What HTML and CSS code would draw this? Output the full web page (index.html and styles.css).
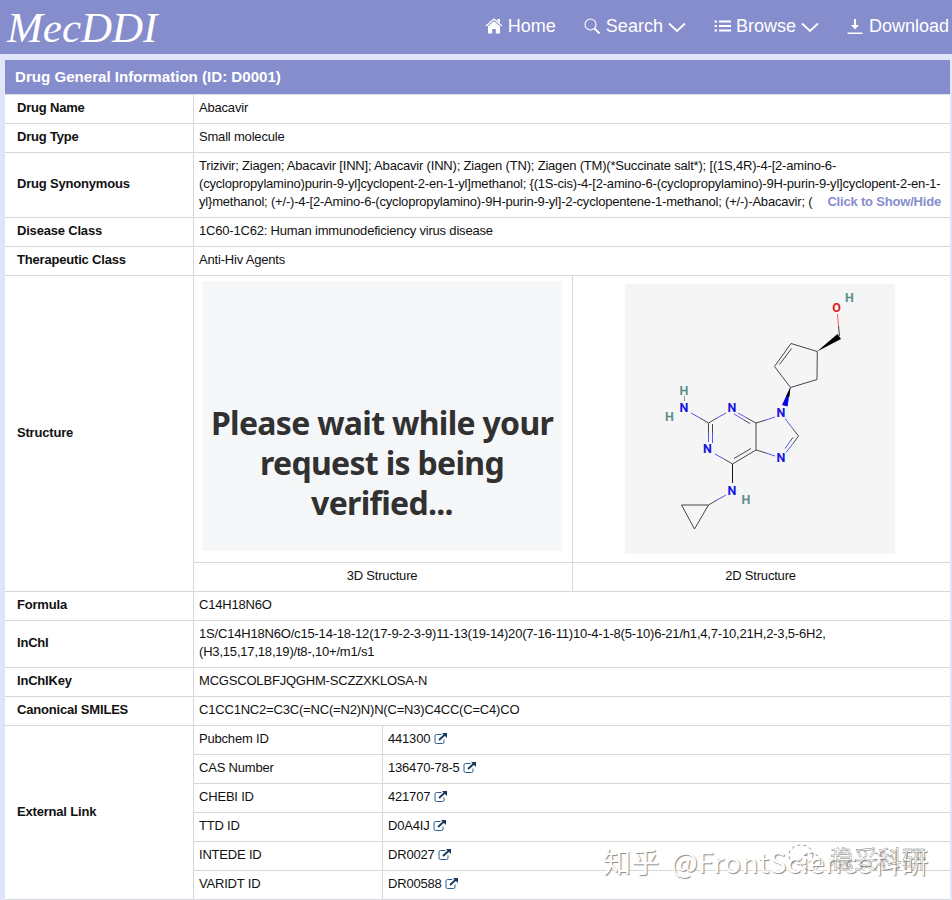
FILE: index.html
```html
<!DOCTYPE html>
<html lang="en">
<head>
    <meta charset="UTF-8">
    <meta name="viewport" content="width=device-width, initial-scale=1.0">
    <title>MecDDI - Abacavir</title>
    <link rel="stylesheet" href="styles.css">
</head>
<body>

<svg class="sprite">
    <symbol id="chevron" viewBox="0 0 18 11">
        <path d="M1 1.5 L9 9 L17 1.5" fill="none" stroke="#fff" stroke-width="1.8"/>
    </symbol>
    <symbol id="external" viewBox="0 0 14 13">
        <path d="M7.5 2.5 H2.5 Q1 2.5 1 4 V10 Q1 11.5 2.5 11.5 H8.5 Q10 11.5 10 10 V7.5" fill="none" stroke="#2d5c8c" stroke-width="1"/>
        <path d="M5 8 L11 2.5" fill="none" stroke="#16385e" stroke-width="1.8"/>
        <path d="M8 1 H13 V6 Z" fill="#16385e"/>
    </symbol>
</svg>

<header class="navbar">
    <a class="logo" href="#">MecDDI</a>
    <nav class="menu">
        <a class="home" href="#">
            <svg width="18" height="16" viewBox="0 0 18 16">
                <path d="M1 8 L9 1 L17 8" fill="none" stroke="#fff" stroke-width="1.3"/>
                <path d="M12.5 1 H15 V5 L12.5 3 Z" fill="#fff"/>
                <path d="M3 8.2 L9 3.2 L15 8.2 V15.5 H10.8 V11 H7.2 V15.5 H3 Z" fill="#fff"/>
            </svg>
            <span>Home</span>
        </a>
        <a class="search" href="#">
            <svg width="17" height="17" viewBox="0 0 17 17">
                <circle cx="6.5" cy="6.5" r="5.5" fill="none" stroke="#fff" stroke-width="1.1"/>
                <path d="M10.5 10.5 L15.5 15.5" stroke="#fff" stroke-width="2"/>
            </svg>
            <span>Search</span>
            <svg class="arrow" width="18" height="11"><use href="#chevron"/></svg>
        </a>
        <a class="browse" href="#">
            <svg width="17" height="14" viewBox="0 0 17 14">
                <path d="M5 2.5 H17 M5 7 H17 M5 11.5 H17 M0.5 2.5 H3 M0.5 7 H3 M0.5 11.5 H3" stroke="#fff" stroke-width="2"/>
            </svg>
            <span>Browse</span>
            <svg class="arrow" width="18" height="11"><use href="#chevron"/></svg>
        </a>
        <a class="download" href="#">
            <svg width="16" height="17" viewBox="0 0 16 17">
                <path d="M7 1 H9 V7 H12 L8 11.5 L4 7 H7 Z M0.5 14.5 H15.5 V16 H0.5 Z" fill="#fff"/>
            </svg>
            <span>Download</span>
        </a>
    </nav>
</header>

<main class="content">
    <table class="drug-table">
        <colgroup>
            <col class="col-label">
            <col class="col-sub">
            <col class="col-mid">
            <col>
        </colgroup>
        <thead>
            <tr><th colspan="4">Drug General Information (ID: D0001)</th></tr>
        </thead>
        <tbody>
            <tr>
                <th>Drug Name</th>
                <td colspan="3">Abacavir</td>
            </tr>
            <tr>
                <th>Drug Type</th>
                <td colspan="3">Small molecule</td>
            </tr>
            <tr>
                <th>Drug Synonymous</th>
                <td colspan="3">
                    Trizivir; Ziagen; Abacavir [INN]; Abacavir (INN); Ziagen (TN); Ziagen (TM)(*Succinate salt*); [(1S,4R)-4-[2-amino-6-<br>
                    (cyclopropylamino)purin-9-yl]cyclopent-2-en-1-yl]methanol; {(1S-cis)-4-[2-amino-6-(cyclopropylamino)-9H-purin-9-yl]cyclopent-2-en-1-<br>
                    yl}methanol; (+/-)-4-[2-Amino-6-(cyclopropylamino)-9H-purin-9-yl]-2-cyclopentene-1-methanol; (+/-)-Abacavir; (
                    <a class="toggle" href="#">Click to Show/Hide</a>
                </td>
            </tr>
            <tr>
                <th>Disease Class</th>
                <td colspan="3">1C60-1C62: Human immunodeficiency virus disease</td>
            </tr>
            <tr>
                <th>Therapeutic Class</th>
                <td colspan="3">Anti-Hiv Agents</td>
            </tr>
            <tr>
                <th rowspan="2">Structure</th>
                <td colspan="2" class="view-3d">
                    <div class="wait">Please wait while your<br>request is being<br>verified...</div>
                </td>
                <td class="view-2d">
                    <svg class="molecule" width="270" height="270" viewBox="0 4 270 270">
                        <!-- carbon bonds -->
                        <g fill="none" stroke="#333" stroke-width="0.9">
                            <path d="M166 63.5 L192.300 71.5 L192 99.500 L165.500 107.500 L149.500 86.500 Z"/>
                            <path d="M166.500 68.500 L154.500 84.500"/>
                            <path d="M83.500 143 V153 M87.500 144 V153 M83.500 143 L92 138 M83.500 143 L75 138"/>
                            <path d="M131 143 V170 L107.500 184 M126 168.500 L109 178.500 M107.500 184 L99 179"/>
                            <path d="M107.500 184 V203" stroke="#000"/>
                            <path d="M83.500 225 H56.500 L69.500 249 Z M83.500 225 L92 220"/>
                            <path d="M131 143 L141 140 M131 143 L121 137.500 M125 143.500 L119 140 M131 170 L141 173"/>
                            <path d="M173.500 156 L168 149 M173.500 156 L168 163.500 M168 157.500 L165 161.500"/>
                            <path d="M214.500 56 L213.500 46"/>
                            <path d="M59.500 116 V121" stroke="#6a9a92"/>
                        </g>
                        <!-- nitrogen side of the bonds -->
                        <g fill="none" stroke="#4646e8" stroke-width="0.9">
                            <path d="M75 138 L66 133 M92 138 L101 133"/>
                            <path d="M121 137.500 L113 133 M119 140 L109 134"/>
                            <path d="M83.500 153 V162 M87.500 153 V163"/>
                            <path d="M99 179 L90 174 M141 140 L150 137 M141 173 L150 176"/>
                            <path d="M168 149 L160 138.500 M168 163.500 L161 172.500 M165 161.500 L160 168.500"/>
                            <path d="M92 220 L101 215"/>
                        </g>
                        <path d="M213.500 46 L212.500 34" fill="none" stroke="#f06060"/>
                        <path d="M192 71.500 L212.500 54 L216 59 Z" fill="#000"/>
                        <path d="M165.500 107 L157 125 L162.500 126.500 Z" fill="#0000e0"/>
                        <path d="M165.500 107 L161 116.500 L164.300 117 Z" fill="#000"/>
                        <g class="atoms">
                            <text class="n" x="59" y="131.500">N</text>
                            <text class="n" x="107" y="131.500">N</text>
                            <text class="n" x="156" y="137">N</text>
                            <text class="n" x="82.500" y="173">N</text>
                            <text class="n" x="156" y="182">N</text>
                            <text class="n" x="107" y="214.500">N</text>
                            <text class="o" x="211.500" y="32">O</text>
                            <text class="h" x="224.500" y="22">H</text>
                            <text class="h" x="59" y="115">H</text>
                            <text class="h" x="44.500" y="141">H</text>
                            <text class="h" x="121" y="223.500">H</text>
                        </g>
                    </svg>
                </td>
            </tr>
            <tr class="caption">
                <td colspan="2">3D Structure</td>
                <td>2D Structure</td>
            </tr>
            <tr>
                <th>Formula</th>
                <td colspan="3">C14H18N6O</td>
            </tr>
            <tr>
                <th>InChI</th>
                <td colspan="3">1S/C14H18N6O/c15-14-18-12(17-9-2-3-9)11-13(19-14)20(7-16-11)10-4-1-8(5-10)6-21/h1,4,7-10,21H,2-3,5-6H2,<br>(H3,15,17,18,19)/t8-,10+/m1/s1</td>
            </tr>
            <tr>
                <th>InChIKey</th>
                <td colspan="3">MCGSCOLBFJQGHM-SCZZXKLOSA-N</td>
            </tr>
            <tr>
                <th>Canonical SMILES</th>
                <td colspan="3">C1CC1NC2=C3C(=NC(=N2)N)N(C=N3)C4CC(C=C4)CO</td>
            </tr>
            <tr>
                <th rowspan="6">External Link</th>
                <td>Pubchem ID</td>
                <td colspan="2">441300 <a href="#"><svg class="ext"><use href="#external"/></svg></a></td>
            </tr>
            <tr>
                <td>CAS Number</td>
                <td colspan="2">136470-78-5 <a href="#"><svg class="ext"><use href="#external"/></svg></a></td>
            </tr>
            <tr>
                <td>CHEBI ID</td>
                <td colspan="2">421707 <a href="#"><svg class="ext"><use href="#external"/></svg></a></td>
            </tr>
            <tr>
                <td>TTD ID</td>
                <td colspan="2">D0A4IJ <a href="#"><svg class="ext"><use href="#external"/></svg></a></td>
            </tr>
            <tr>
                <td>INTEDE ID</td>
                <td colspan="2">DR0027 <a href="#"><svg class="ext"><use href="#external"/></svg></a></td>
            </tr>
            <tr>
                <td>VARIDT ID</td>
                <td colspan="2">DR00588 <a href="#"><svg class="ext"><use href="#external"/></svg></a></td>
            </tr>
        </tbody>
    </table>
</main>

<div class="watermark">知乎 @FrontScience科研</div>
<div class="account">
    <svg width="36" height="28" viewBox="0 0 36 28" fill="none" stroke="#777" stroke-width="0.8" stroke-dasharray="3 3">
        <ellipse cx="14" cy="11" rx="12" ry="10"/>
        <ellipse cx="24" cy="18" rx="10" ry="8.5"/>
    </svg>
    <span>稳妥科研</span>
</div>

</body>
</html>
```

FILE: styles.css
```css
* {
    margin: 0;
    padding: 0;
    box-sizing: border-box;
}

body {
    font-family: "Liberation Sans", Arial, sans-serif;
    font-size: 13px;
    letter-spacing: -0.19px;
    line-height: 18px;
    color: #111;
    background-color: #e2e4f8;
    height: 900px;
    overflow: hidden;
    position: relative;
}

a {
    text-decoration: none;
}

.sprite {
    display: none;
}

.navbar {
    display: flex;
    justify-content: space-between;
    height: 54px;
    letter-spacing: 0;
    background-color: #868dcc;
    padding-left: 7px;
    padding-right: 3px;
}

.logo {
    font-family: "Liberation Serif", "Times New Roman", serif;
    font-style: italic;
    font-size: 43px;
    line-height: 55px;
    color: #fff;
}

.menu {
    display: flex;
    align-items: center;
    height: 52px;
    font-size: 18px;
}

.menu a {
    display: flex;
    align-items: center;
    gap: 5px;
    color: #fff;
    margin-left: 28px;
}

.menu .download {
    gap: 6px;
}

.menu .arrow {
    margin-top: 2px;
}

.content {
    padding: 6px 2px 0 5px;
}

.drug-table {
    width: 945px;
    table-layout: fixed;
    border-collapse: separate;
    border-spacing: 0;
    background-color: #fff;
}

.col-label,
.col-sub {
    width: 189px;
}

.col-mid {
    width: 190px;
}

thead th {
    height: 35px;
    padding: 0 10px;
    text-align: left;
    font-size: 15.1px;
    letter-spacing: 0;
    color: #fff;
    background-color: #868dcc;
    border-bottom: 1px solid #dee2e6;
}

tbody th {
    padding: 4px 12px 6px;
    text-align: left;
    font-weight: bold;
    border-right: 1px solid #d6d8dc;
    border-bottom: 1px solid #d6d8dc;
}

td {
    padding: 4px 5px 6px;
    border-right: 1px solid #d6d8dc;
    border-bottom: 1px solid #d6d8dc;
    white-space: nowrap;
}

td:last-child {
    border-right: none;
}

.toggle {
    float: right;
    margin-right: 4px;
    font-weight: bold;
    color: #868dcc;
}

.view-3d {
    height: 287px;
    padding: 5px 8px 0;
    vertical-align: top;
}

.view-2d {
    padding: 8px 52px 0;
    vertical-align: top;
}

.wait {
    width: 360px;
    height: 270px;
    padding-top: 122px;
    text-align: center;
    font-family: "Noto Sans", "Open Sans", sans-serif;
    font-size: 32px;
    font-weight: bold;
    letter-spacing: -0.7px;
    line-height: 40px;
    color: #313131;
    background-color: #f5f7f9;
}

.molecule {
    display: block;
    background-color: #f5f5f5;
}

.atoms text {
    font-family: Roboto, sans-serif;
    font-size: 12.5px;
    font-weight: bold;
    letter-spacing: 0;
    text-anchor: middle;
}

.n {
    fill: #1414e0;
}

.o {
    fill: #e02020;
}

.h {
    fill: #5c8f88;
}

.caption td {
    text-align: center;
    padding-right: 7px;
}

.ext {
    width: 14px;
    height: 13px;
    vertical-align: -2px;
}

.watermark {
    position: absolute;
    left: 603px;
    top: 843px;
    font-family: "Noto Sans CJK SC", sans-serif;
    font-size: 28px;
    line-height: 36px;
    letter-spacing: 0.3px;
    word-spacing: 5px;
    white-space: nowrap;
    color: #fff;
    text-shadow: 1px 1px 1px #888;
}

.account {
    position: absolute;
    left: 787px;
    top: 844px;
    display: flex;
    align-items: center;
    gap: 7px;
    height: 28px;
    font-family: "Noto Sans CJK SC", sans-serif;
    font-size: 24px;
    letter-spacing: 0;
    white-space: nowrap;
    color: transparent;
    -webkit-text-stroke: 0.4px #777;
}
```
